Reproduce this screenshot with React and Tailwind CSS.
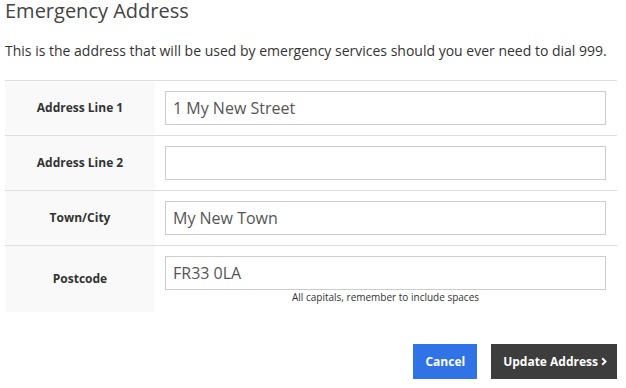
export default function App() {
  const rows = [
    { label: 'Address Line 1', value: '1 My New Street' },
    { label: 'Address Line 2', value: '' },
    { label: 'Town/City', value: 'My New Town' },
    { label: 'Postcode', value: 'FR33 0LA', hint: 'All capitals, remember to include spaces' },
  ]

  return (
    <div className="w-[626px] h-[388px] bg-white px-[5px] pr-[9px] font-['Open_Sans',sans-serif] text-[#333]">
      <h2 className="text-[20px] leading-[22px] text-[#444] font-normal">Emergency Address</h2>
      <p className="mt-[19px] text-[14px] leading-[20px] text-[#333]">
        This is the address that will be used by emergency services should you ever need to dial 999.
      </p>

      {/* Formulaire */}
      <div className="mt-[19px]">
        {rows.map((row) => (
          <div key={row.label} className="flex border-t border-[#ddd]">
            <div className="w-[150px] bg-[#f9f9f9] flex items-center justify-center text-[12px] font-bold text-[#333]">
              {row.label}
            </div>
            <div className={`flex-1 pl-[10px] pr-[11px] pt-[10px] ${row.hint ? 'pb-[8px]' : 'pb-[10px]'}`}>
              <div className="h-[34px] border border-[#ccc] flex items-center px-[7px] text-[16px] text-[#555]">
                {row.value}
              </div>
              {row.hint && (
                <p className="text-center text-[10px] leading-[14px] text-[#333]">{row.hint}</p>
              )}
            </div>
          </div>
        ))}
      </div>

      {/* Boutons */}
      <div className="mt-[32px] flex justify-end gap-[14px]">
        <button className="h-[35px] px-[12px] bg-[#2f73e6] text-white text-[12px] font-bold">Cancel</button>
        <button className="h-[35px] pl-[12px] pr-[10px] bg-[#3d3d3d] text-white text-[12px] font-bold flex items-center gap-[3px]">
          Update Address
          <svg width="6" height="9" viewBox="0 0 6 9">
            <path d="M1.2 1.2 L4.5 4.5 L1.2 7.8" fill="none" stroke="white" strokeWidth="2" />
          </svg>
        </button>
      </div>
    </div>
  )
}
